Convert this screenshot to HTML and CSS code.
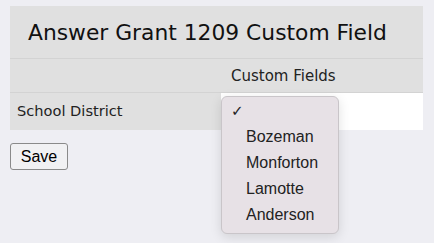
FILE: index.html
```html
<!DOCTYPE html>
<html>
<head>
<meta charset="utf-8">
<link rel="stylesheet" href="styles.css">
</head>
<body>
<div class="page">
  <div class="card">
    <div class="title">Answer Grant 1209 Custom Field</div>
    <div class="grid">
      <div class="th"></div>
      <div class="th th-label">Custom Fields</div>
      <div class="td td-label">School District</div>
      <div class="td td-value"></div>
    </div>
  </div>
  <button class="save">Save</button>
</div>
<div class="popup">
  <div class="opt selected"><span class="check">&#10003;</span></div>
  <div class="opt">Bozeman</div>
  <div class="opt">Monforton</div>
  <div class="opt">Lamotte</div>
  <div class="opt">Anderson</div>
</div>
</body>
</html>
```
FILE: styles.css
```css
html, body {
  margin: 0;
  padding: 0;
  background: #eeeef3;
  width: 434px;
  height: 243px;
  overflow: hidden;
}
.page {
  padding: 6px 11px 0 10px;
}
.card {
  width: 413px;
}
.title {
  height: 52px;
  background: #e0e0e0;
  border-bottom: 1px solid #d3d3d3;
  font-family: "DejaVu Sans", sans-serif;
  font-size: 21.8px;
  line-height: 54px;
  padding-left: 18px;
  color: #111;
}
.grid {
  display: grid;
  grid-template-columns: 211px 1fr;
}
.th {
  height: 33px;
  background: #e0e0e0;
  border-bottom: 1px solid #d3d3d3;
}
.th-label {
  font-family: "DejaVu Sans", sans-serif;
  font-size: 15px;
  line-height: 34px;
  padding-left: 10px;
  color: #222;
}
.td {
  height: 37px;
}
.td-label {
  background: #e0e0e0;
  font-family: "DejaVu Sans", sans-serif;
  font-size: 14.6px;
  line-height: 36px;
  padding-left: 7px;
  color: #222;
}
.td-value {
  background: #fff;
}
.save {
  margin-top: 13px;
  height: 27px;
  width: 58px;
  padding: 0;
  font-family: "Liberation Sans", sans-serif;
  font-size: 16px;
  color: #000;
  background: #f1f1f3;
  border: 1px solid #8a8a8a;
  border-radius: 3px;
}
.popup {
  position: absolute;
  left: 221px;
  top: 96px;
  width: 116px;
  height: 135px;
  background: #e7e1e6;
  border: 1px solid #c9c5c9;
  border-radius: 6px;
  box-shadow: 0 3px 12px rgba(0,0,0,0.12);
  padding-top: 1px;
  box-sizing: content-box;
}
.opt {
  height: 26px;
  line-height: 26px;
  padding-left: 24px;
  font-family: "Liberation Sans", sans-serif;
  font-size: 16px;
  color: #222;
}
.check {
  display: inline-block;
  margin-left: -15px;
  font-size: 15px;
  font-weight: bold;
  font-family: "DejaVu Sans", sans-serif;
}
```
